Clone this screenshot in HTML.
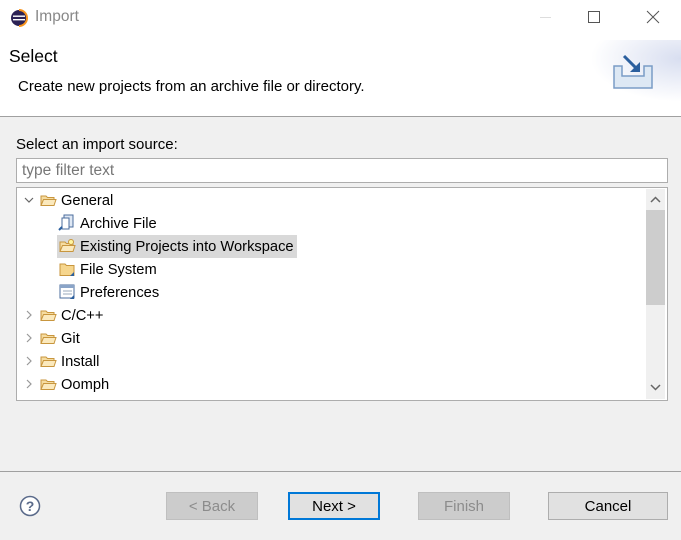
<!DOCTYPE html>
<html><head><style>
*{margin:0;padding:0;box-sizing:border-box}
body{width:681px;height:540px;overflow:hidden;background:#f0f0f0;font-family:"Liberation Sans",sans-serif;font-size:15px;color:#000;position:relative}
.a{position:absolute}
.row{position:absolute;height:23px;line-height:25px;white-space:nowrap;font-size:14.7px}
.btn{position:absolute;top:492px;height:28px;width:92px;border:1px solid #adadad;background:#e1e1e1;text-align:center;line-height:27px;font-size:15px}
.dis{background:#cccccc;border-color:#bfbfbf;color:#8c8c8c}
</style></head><body>
<div class="a" style="left:0;top:0;width:681px;height:116px;background:#fff"></div>
<div class="a" style="left:0;top:116px;width:681px;height:1px;background:#a0a0a0"></div>
<svg class="a" style="left:10px;top:9px" width="18" height="18"><circle cx="9" cy="9" r="8" fill="#2c2255"/><path d="M9 1a8 8 0 0 1 0 16" fill="none" stroke="#f7941e" stroke-width="2"/><rect x="3" y="6.5" width="12" height="1.4" fill="#fff"/><rect x="3" y="10" width="12" height="1.4" fill="#fff"/></svg>
<div class="a" style="left:35px;top:8px;font-size:15.5px;color:#888">Import</div>
<div class="a" style="left:540px;top:17px;width:11px;height:1px;background:#ddd"></div>
<div class="a" style="left:588px;top:11px;width:12px;height:12px;border:1px solid #555"></div>
<svg class="a" style="left:646px;top:10px" width="14" height="14"><path d="M1 1L13 13M13 1L1 13" stroke="#555" stroke-width="1"/></svg>
<div class="a" style="left:9px;top:46px;font-size:17.5px">Select</div>
<div class="a" style="left:18px;top:78px;font-size:15px">Create new projects from an archive file or directory.</div>
<div class="a" style="left:590px;top:40px;width:91px;height:62px;background:radial-gradient(ellipse at 100% 30%,#d8def0,#fff 70%)"></div>
<svg class="a" style="left:612px;top:52px" width="44" height="40"><path d="M2 14h8v10h22V14h8v22H2z" fill="#dde8f4" stroke="#7a9cc6" stroke-width="1.5"/><path d="M12 4l14 14" stroke="#2b5f9e" stroke-width="3"/><path d="M28 10v10H18z" fill="#2b5f9e"/></svg>
<div class="a" style="left:16px;top:136px">Select an import source:</div>
<div class="a" style="left:16px;top:158px;width:652px;height:25px;background:#fff;border:1px solid #adadad;color:#777;padding-left:5px;line-height:24px;font-size:15.5px">type filter text</div>
<div class="a" style="left:16px;top:187px;width:652px;height:214px;background:#fff;border:1px solid #adadad"></div>
<div class="a" style="left:646px;top:189px;width:19px;height:210px;background:#f0f0f0"></div>
<div class="a" style="left:646px;top:210px;width:19px;height:95px;background:#cdcdcd"></div>
<svg class="a" style="left:650px;top:196px" width="11" height="8"><path d="M1 6l4.5-4.5L10 6" fill="none" stroke="#666" stroke-width="1.5"/></svg>
<svg class="a" style="left:650px;top:383px" width="11" height="8"><path d="M1 2l4.5 4.5L10 2" fill="none" stroke="#666" stroke-width="1.5"/></svg>
<div class="a" style="left:57px;top:235px;width:240px;height:23px;background:#d9d9d9"></div>
<svg width="0" height="0" style="position:absolute"><defs><g id="f"><path d="M1 4h5l1.5 1.5H14v8H1z" fill="#f6dca0" stroke="#c8963e"/><path d="M1 13.5l2.5-6H16l-2 6z" fill="#fbe9bd" stroke="#c8963e"/></g></defs></svg>
<svg class="a" style="left:24px;top:196px" width="10" height="8"><path d="M1 2l4 4 4-4" fill="none" stroke="#666" stroke-width="1.2"/></svg>
<svg class="a" style="left:40px;top:192px" width="17" height="16"><use href="#f"/></svg>
<div class="row" style="left:61px;top:189px">General</div>
<svg class="a" style="left:58px;top:214px" width="18" height="18"><rect x="6" y="1" width="9" height="12" fill="#dfe8f4" stroke="#4b6c9c"/><rect x="4" y="4" width="7" height="11" fill="#fff" stroke="#4b6c9c"/><path d="M1 16l3-3" stroke="#2b5f9e" stroke-width="2"/></svg>
<div class="row" style="left:80px;top:212px">Archive File</div>
<svg class="a" style="left:59px;top:238px" width="17" height="16"><use href="#f"/><circle cx="12" cy="4" r="2.5" fill="#fff6a0" stroke="#c8963e"/></svg>
<div class="row" style="left:80px;top:235px">Existing Projects into Workspace</div>
<svg class="a" style="left:59px;top:261px" width="17" height="16"><path d="M1 3h5l1.5 1.5H15v10H1z" fill="#f6d68e" stroke="#c8963e"/><path d="M11 15l4-4v4z" fill="#2b5f9e"/></svg>
<div class="row" style="left:80px;top:258px">File System</div>
<svg class="a" style="left:59px;top:284px" width="17" height="16"><rect x="1" y="1" width="14" height="13" fill="#fff" stroke="#4b6c9c"/><rect x="1" y="1" width="14" height="3" fill="#8aa4c8"/><path d="M4 7h9M4 10h9" stroke="#9ab"/><path d="M11 15l4-4v4z" fill="#2b5f9e"/></svg>
<div class="row" style="left:80px;top:281px">Preferences</div>
<svg class="a" style="left:25px;top:310px" width="8" height="10"><path d="M2 1l4 4-4 4" fill="none" stroke="#999" stroke-width="1.2"/></svg>
<svg class="a" style="left:40px;top:307px" width="17" height="16"><use href="#f"/></svg>
<div class="row" style="left:61px;top:304px">C/C++</div>
<svg class="a" style="left:25px;top:333px" width="8" height="10"><path d="M2 1l4 4-4 4" fill="none" stroke="#999" stroke-width="1.2"/></svg>
<svg class="a" style="left:40px;top:330px" width="17" height="16"><use href="#f"/></svg>
<div class="row" style="left:61px;top:327px">Git</div>
<svg class="a" style="left:25px;top:356px" width="8" height="10"><path d="M2 1l4 4-4 4" fill="none" stroke="#999" stroke-width="1.2"/></svg>
<svg class="a" style="left:40px;top:353px" width="17" height="16"><use href="#f"/></svg>
<div class="row" style="left:61px;top:350px">Install</div>
<svg class="a" style="left:25px;top:379px" width="8" height="10"><path d="M2 1l4 4-4 4" fill="none" stroke="#999" stroke-width="1.2"/></svg>
<svg class="a" style="left:40px;top:376px" width="17" height="16"><use href="#f"/></svg>
<div class="row" style="left:61px;top:373px">Oomph</div>
<div class="a" style="left:0;top:471px;width:681px;height:1px;background:#a0a0a0"></div>
<svg class="a" style="left:19px;top:495px" width="22" height="22"><circle cx="11" cy="11" r="9.5" fill="#fff" stroke="#5a6a8a" stroke-width="1.5"/><text x="11" y="16" font-family="Liberation Sans" font-size="14" font-weight="bold" fill="#5a6a8a" text-anchor="middle">?</text></svg>
<div class="btn dis" style="left:166px">&lt; Back</div>
<div class="btn" style="left:288px;border:2px solid #0078d7;line-height:25px">Next &gt;</div>
<div class="btn dis" style="left:418px">Finish</div>
<div class="btn" style="left:548px;width:120px">Cancel</div>
</body></html>
